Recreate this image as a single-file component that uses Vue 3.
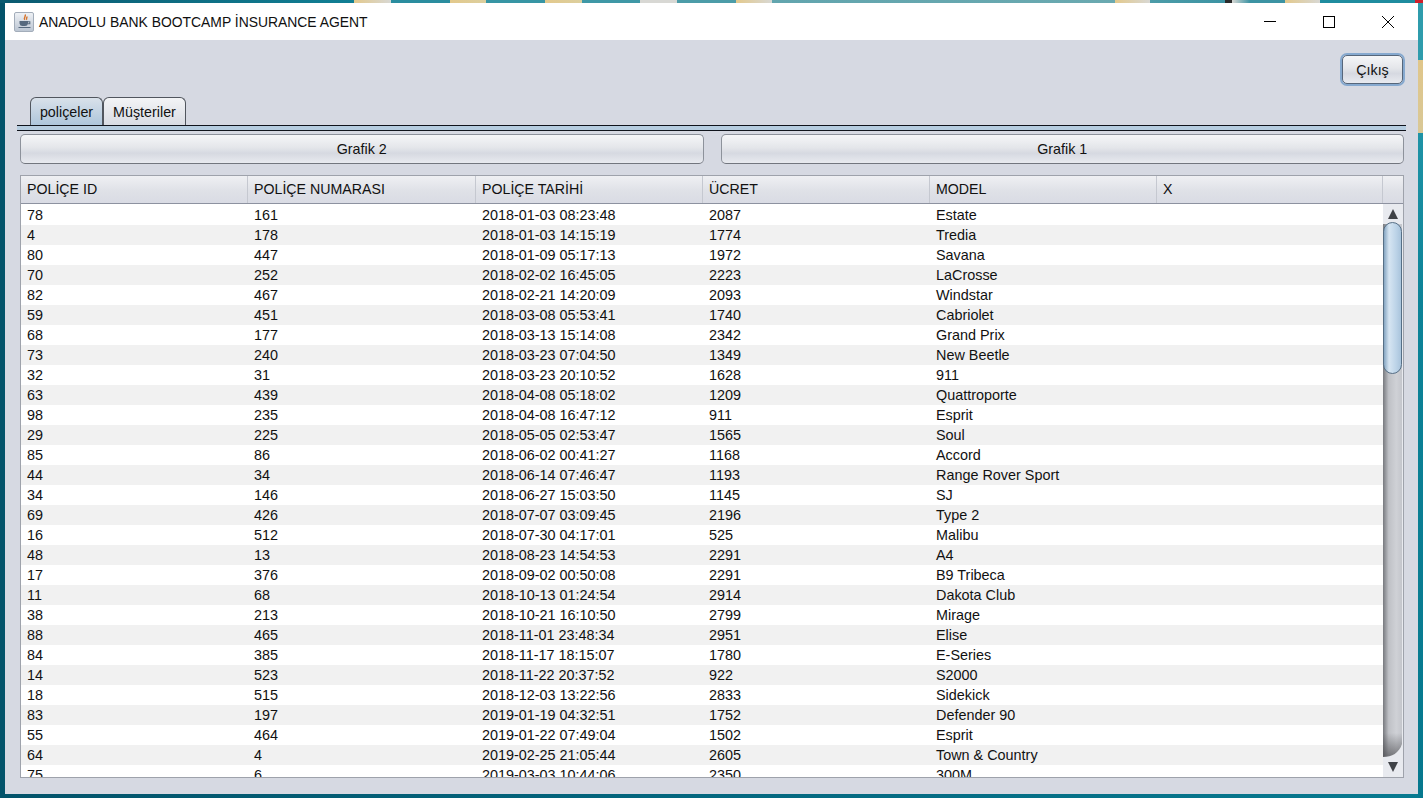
<script setup>
const columns = ["POLİÇE ID", "POLİÇE NUMARASI", "POLİÇE TARİHİ", "ÜCRET", "MODEL", "X"];

const rows = [
  [78, 161, "2018-01-03 08:23:48", 2087, "Estate"],
  [4, 178, "2018-01-03 14:15:19", 1774, "Tredia"],
  [80, 447, "2018-01-09 05:17:13", 1972, "Savana"],
  [70, 252, "2018-02-02 16:45:05", 2223, "LaCrosse"],
  [82, 467, "2018-02-21 14:20:09", 2093, "Windstar"],
  [59, 451, "2018-03-08 05:53:41", 1740, "Cabriolet"],
  [68, 177, "2018-03-13 15:14:08", 2342, "Grand Prix"],
  [73, 240, "2018-03-23 07:04:50", 1349, "New Beetle"],
  [32, 31, "2018-03-23 20:10:52", 1628, "911"],
  [63, 439, "2018-04-08 05:18:02", 1209, "Quattroporte"],
  [98, 235, "2018-04-08 16:47:12", 911, "Esprit"],
  [29, 225, "2018-05-05 02:53:47", 1565, "Soul"],
  [85, 86, "2018-06-02 00:41:27", 1168, "Accord"],
  [44, 34, "2018-06-14 07:46:47", 1193, "Range Rover Sport"],
  [34, 146, "2018-06-27 15:03:50", 1145, "SJ"],
  [69, 426, "2018-07-07 03:09:45", 2196, "Type 2"],
  [16, 512, "2018-07-30 04:17:01", 525, "Malibu"],
  [48, 13, "2018-08-23 14:54:53", 2291, "A4"],
  [17, 376, "2018-09-02 00:50:08", 2291, "B9 Tribeca"],
  [11, 68, "2018-10-13 01:24:54", 2914, "Dakota Club"],
  [38, 213, "2018-10-21 16:10:50", 2799, "Mirage"],
  [88, 465, "2018-11-01 23:48:34", 2951, "Elise"],
  [84, 385, "2018-11-17 18:15:07", 1780, "E-Series"],
  [14, 523, "2018-11-22 20:37:52", 922, "S2000"],
  [18, 515, "2018-12-03 13:22:56", 2833, "Sidekick"],
  [83, 197, "2019-01-19 04:32:51", 1752, "Defender 90"],
  [55, 464, "2019-01-22 07:49:04", 1502, "Esprit"],
  [64, 4, "2019-02-25 21:05:44", 2605, "Town & Country"],
  [75, 6, "2019-03-03 10:44:06", 2350, "300M"],
];
</script>

<template>
  <div class="desktop">
    <div class="window">
      <div class="titlebar">
        <div class="app-icon">
          <svg width="17" height="17" viewBox="0 0 17 17">
            <path d="M9 1.500c1.500 1.800-1.800 2.800-.3 5.300M10.800 3.500c.6 1.200-1 2 0 3.300" fill="none" stroke="#d6732a" stroke-width="1.400" />
            <path d="M3.500 8h8.500v2.500a3 3 0 0 1-3 2.500h-2.500a3 3 0 0 1-3-2.500z" fill="#56697e" />
            <path d="M12 8.800h1.800v2h-2.300M2.500 14.500h12" fill="none" stroke="#56697e" stroke-width="1.100" />
          </svg>
        </div>
        <span class="title">ANADOLU BANK BOOTCAMP İNSURANCE AGENT</span>
        <div class="win-controls">
          <span class="win-btn">
            <svg width="12" height="12" viewBox="0 0 12 12"><path d="M0 5.500h12" stroke="#000" stroke-width="1" /></svg>
          </span>
          <span class="win-btn">
            <svg width="12" height="12" viewBox="0 0 12 12"><rect x=".5" y=".5" width="11" height="11" fill="none" stroke="#000" /></svg>
          </span>
          <span class="win-btn">
            <svg width="12" height="12" viewBox="0 0 12 12"><path d="M0 0l12 12M12 0L0 12" stroke="#000" stroke-width="1" /></svg>
          </span>
        </div>
      </div>

      <div class="content">
        <div class="top-row">
          <button class="btn exit-btn">Çıkış</button>
        </div>

        <div class="tabs">
          <div class="tab tab-active">poliçeler</div>
          <div class="tab">Müşteriler</div>
        </div>
        <div class="tab-rule"></div>

        <div class="graph-row">
          <button class="btn graph-btn">Grafik 2</button>
          <button class="btn graph-btn">Grafik 1</button>
        </div>

        <div class="table-box">
          <div class="thead">
            <div v-for="col in columns" :key="col" class="th">{{ col }}</div>
            <div class="th th-corner"></div>
          </div>
          <div class="tbody">
            <div class="rows">
              <div v-for="(row, i) in rows" :key="i" class="tr" :class="{ odd: i % 2 === 1 }">
                <div v-for="(cell, j) in row" :key="j" class="td">{{ cell }}</div>
              </div>
            </div>
            <div class="scrollbar">
              <div class="arrow-btn"><span class="arrow-up"></span></div>
              <div class="track">
                <div class="thumb"></div>
              </div>
              <div class="arrow-btn"><span class="arrow-down"></span></div>
              <svg class="track-cap" width="20" height="13" viewBox="0 0 20 13">
                <path d="M0 13C9 13 16 9 19 0H20V13Z" fill="#e8eaef" />
              </svg>
            </div>
          </div>
        </div>
      </div>
    </div>
  </div>
</template>

<style scoped>
.desktop {
  width: 1423px;
  height: 798px;
  overflow: hidden;
  box-sizing: border-box;
  padding: 3px 5px 4px 5px;
  background:
    linear-gradient(90deg,
      #0a5a70 0, #117f94 354px,
      #e3c98c 354px, #d8d8d4 391px,
      #2a8d9f 391px, #2a8d9f 450px,
      #e3c98c 450px, #dccf9f 486px,
      #3795a4 486px, #3795a4 545px,
      #e3c98c 545px, #dccf9f 582px,
      #3f98a6 582px, #3f98a6 640px,
      #d8d8d4 640px, #d8d8d4 677px,
      #4c9ca8 677px, #4c9ca8 736px,
      #e3c98c 736px, #d8d8d4 772px,
      #62a5ae 772px, #6aa9b0 1115px,
      #e3c98c 1115px, #d8d8d4 1150px,
      #4c9ca8 1150px, #3c93a3 1225px,
      #2b2b2b 1225px, #2b2b2b 1232px,
      #d8d8d4 1232px, #3c93a3 1250px,
      #3c93a3 1285px,
      #e3c98c 1285px, #d8d8d4 1320px,
      #1f8c9f 1320px, #1f8c9f 1415px,
      #d0202c 1415px, #d0202c 1423px) 0 0 / 100% 3px no-repeat,
    linear-gradient(180deg,
      #2f9cac 0, #2f9cac 60px,
      #e0c68a 60px, #d9c896 133px,
      #1f93a6 133px, #0d8398 300px, #06788e 100%) 100% 0 / 5px 100% no-repeat,
    linear-gradient(90deg, #03536a 0, #04677f 700px, #087a90 100%);
  font-family: "Liberation Sans", Arial, sans-serif;
  color: #111;
}

.window {
  height: 100%;
  display: flex;
  flex-direction: column;
  background: #d6d9e2;
}

.titlebar {
  height: 37px;
  flex: none;
  display: flex;
  align-items: center;
  background: #fff;
  padding-left: 9px;
}

.app-icon {
  width: 20px;
  height: 20px;
  box-sizing: border-box;
  border: 1px solid #a3adba;
  border-radius: 2px;
  background: linear-gradient(180deg, #eef1f5, #bcc6d3);
  display: flex;
  align-items: center;
  justify-content: center;
}

.title {
  margin-left: 5px;
  font-size: 13.9px;
  color: #101010;
}

.win-controls {
  margin-left: auto;
  display: flex;
  margin-right: 1px;
}

.win-btn {
  width: 59px;
  height: 37px;
  display: flex;
  align-items: center;
  justify-content: center;
}

.content {
  flex: 1;
  min-height: 0;
  display: flex;
  flex-direction: column;
  padding: 0 12px 16px 12px;
}

.top-row {
  display: flex;
  justify-content: flex-end;
  height: 57px;
  padding-top: 15px;
  box-sizing: border-box;
}

.btn {
  font-family: inherit;
  font-size: 14.3px;
  color: #111;
  border: 1px solid #8d929b;
  border-bottom-color: #72767e;
  border-radius: 5px;
  background: linear-gradient(180deg, #f5f6f8 0%, #e4e6ea 45%, #d6d9e1 65%, #e8eaef 100%);
  padding: 0;
}

.exit-btn {
  width: 61px;
  height: 29px;
  margin-right: 3px;
  border-color: #56667a;
  box-shadow: 0 0 0 2px #86a9cf;
}

.tabs {
  display: flex;
  height: 28px;
  padding-left: 13px;
  box-sizing: border-box;
}

.tab {
  height: 28px;
  box-sizing: border-box;
  width: 83px;
  border: 1px solid #51565e;
  border-bottom: none;
  border-radius: 6px 6px 0 0;
  background: linear-gradient(180deg, #f3f4f6, #d9dce3);
  font-size: 14.3px;
  text-align: center;
  line-height: 29px;
}

.tab-active {
  width: 73px;
  background: linear-gradient(180deg, #d9e1ea 0%, #aec6db 100%);
}

.tab-rule {
  height: 6px;
  flex: none;
  box-sizing: border-box;
  border-top: 1px solid #10141c;
  border-bottom: 1px solid #10141c;
  background: #b6cde0;
}

.graph-row {
  display: flex;
  gap: 17px;
  padding: 3px 2px 0 3px;
}

.graph-btn {
  flex: 1;
  height: 30px;
}

.table-box {
  flex: 1;
  min-height: 0;
  margin: 11px 2px 0 3px;
  border: 1px solid #9ea2ab;
  display: flex;
  flex-direction: column;
  background: #d6d9e2;
}

.thead {
  height: 27px;
  flex: none;
  display: grid;
  grid-template-columns: 227px 228px 227px 227px 227px 226px 1fr;
  border-bottom: 1px solid #8d92a0;
  background: linear-gradient(180deg, #eff0f3 0%, #dfe1e7 55%, #d9dbe4 100%);
  font-size: 14.2px;
}

.th {
  box-sizing: border-box;
  padding-left: 6px;
  line-height: 26px;
  border-right: 1px solid #c5c8d0;
  white-space: nowrap;
}

.th-corner {
  border-right: none;
}

.tbody {
  flex: 1;
  min-height: 0;
  display: flex;
  background: #fff;
}

.rows {
  flex: 1;
  min-width: 0;
  overflow: hidden;
  padding-top: 1px;
}

.tr {
  height: 20px;
  display: grid;
  grid-template-columns: 227px 228px 227px 227px 227px 1fr;
  font-size: 14.4px;
  line-height: 20px;
}

.tr.odd {
  background: #f1f1f1;
}

.td {
  padding-left: 6px;
  white-space: nowrap;
}

.scrollbar {
  position: relative;
  width: 20px;
  flex: none;
  display: flex;
  flex-direction: column;
  background: #e8eaef;
}

.arrow-btn {
  height: 20px;
  flex: none;
  display: flex;
  align-items: center;
  justify-content: center;
  background: #e8eaef;
}

.arrow-up {
  width: 0;
  height: 0;
  border-left: 5px solid transparent;
  border-right: 5px solid transparent;
  border-bottom: 10px solid #3f4247;
}

.arrow-down {
  width: 0;
  height: 0;
  border-left: 5px solid transparent;
  border-right: 5px solid transparent;
  border-top: 10px solid #3f4247;
}

.track {
  flex: 1;
  min-height: 0;
  margin-right: 1px;
  background:
    linear-gradient(180deg, transparent calc(100% - 24px), rgba(70, 70, 74, 0.6) calc(100% - 2px)),
    linear-gradient(90deg, #77797e 0%, #bfc1c6 30%, #cfd1d6 70%, #c4c6cc 100%);
}

.thumb {
  height: 152px;
  margin-top: -2px;
  box-sizing: border-box;
  border: 1px solid #566f86;
  border-radius: 10px;
  background: linear-gradient(90deg, #86a6c2 0%, #d6e5f2 30%, #bdd4e8 70%, #a9c4dc 100%);
}

.track-cap {
  position: absolute;
  left: 0;
  bottom: 20px;
}
</style>

<style>
html,
body {
  margin: 0;
  overflow: hidden;
}
</style>
